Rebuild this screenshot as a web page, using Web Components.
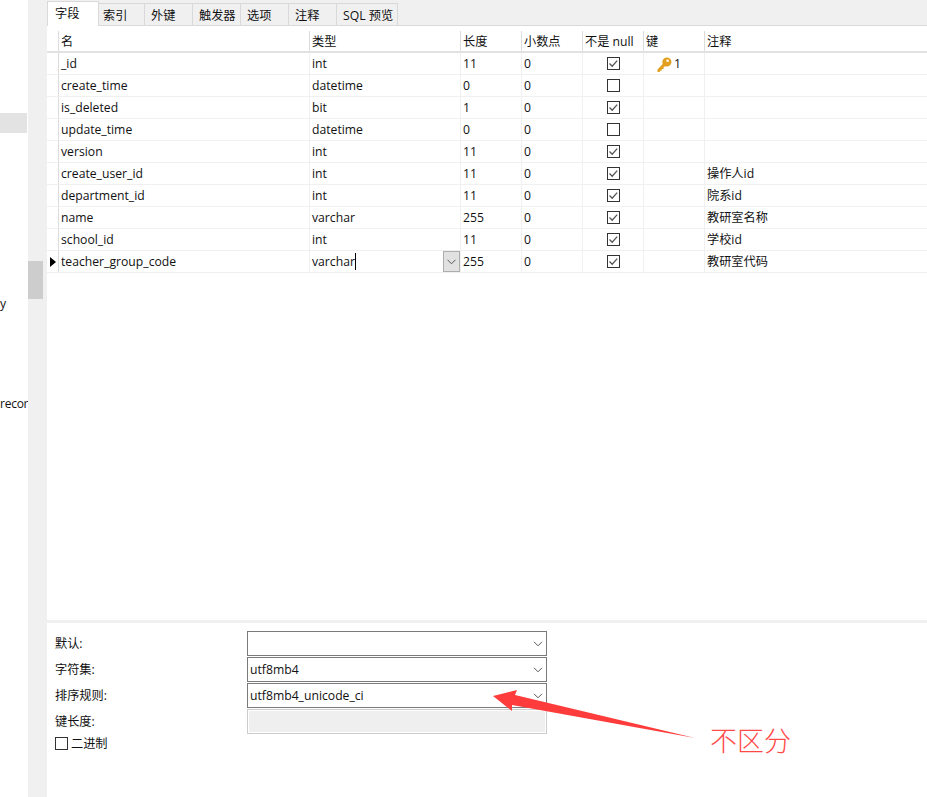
<!DOCTYPE html>
<html lang="zh">
<head>
<meta charset="utf-8">
<title>表设计</title>
<style>
  html, body { margin: 0; height: 100%; background: #fff; overflow: hidden; }
  body {
    font: 12.2px/1 "Open Sans", "Noto Sans CJK SC", sans-serif;
    color: #111;
  }
</style>
</head>
<body>
<table-designer></table-designer>
<script>
const FONT = `"Open Sans", "Noto Sans CJK SC", sans-serif`;

const COLUMNS = ["名", "类型", "长度", "小数点", "不是 null", "键", "注释"];
const FIELDS = [
  { name: "_id", type: "int", len: "11", dec: "0", notNull: true, key: "1", note: "" },
  { name: "create_time", type: "datetime", len: "0", dec: "0", notNull: false, key: "", note: "" },
  { name: "is_deleted", type: "bit", len: "1", dec: "0", notNull: true, key: "", note: "" },
  { name: "update_time", type: "datetime", len: "0", dec: "0", notNull: false, key: "", note: "" },
  { name: "version", type: "int", len: "11", dec: "0", notNull: true, key: "", note: "" },
  { name: "create_user_id", type: "int", len: "11", dec: "0", notNull: true, key: "", note: "操作人id" },
  { name: "department_id", type: "int", len: "11", dec: "0", notNull: true, key: "", note: "院系id" },
  { name: "name", type: "varchar", len: "255", dec: "0", notNull: true, key: "", note: "教研室名称" },
  { name: "school_id", type: "int", len: "11", dec: "0", notNull: true, key: "", note: "学校id" },
  { name: "teacher_group_code", type: "varchar", len: "255", dec: "0", notNull: true, key: "", note: "教研室代码", current: true },
];
const GRID_COLS = "12px 251px 151px repeat(4, 61px) 1fr";

class CheckMark extends HTMLElement {
  constructor() {
    super();
    this.attachShadow({ mode: "open" });
  }
  connectedCallback() {
    const tick = this.hasAttribute("checked")
      ? `<path d="M2.5 6.5 5.2 9.2 10.2 3.6" fill="none" stroke="#555" stroke-width="1.3"/>` : "";
    this.shadowRoot.innerHTML = `
    <style>
      :host { display: inline-block; width: 13px; height: 13px; }
      svg { display: block; }
    </style>
    <svg width="13" height="13" viewBox="0 0 13 13">
      <rect x=".5" y=".5" width="12" height="12" fill="#fff" stroke="#333"/>
      ${tick}
    </svg>`;
  }
}
customElements.define("check-mark", CheckMark);

class KeyIcon extends HTMLElement {
  constructor() {
    super();
    this.attachShadow({ mode: "open" });
  }
  connectedCallback() {
    this.shadowRoot.innerHTML = `
    <style>
      :host { display: inline-block; width: 15px; height: 15px; }
      svg { display: block; }
    </style>
    <svg width="15" height="15" viewBox="0 0 15 15">
      <path fill="#e3a01f" d="M9.8.4a4.7 4.7 0 0 1 4.7 4.7 4.7 4.7 0 0 1-4.7 4.500c-.7 0-1.200-.1-1.700-.4L6.600 10.200v1.700H4.800v1.600H3.400L2.600 15H.5v-2.600l5.200-5.300a4.700 4.700 0 0 1 4.100-6.700z"/>
      <circle cx="10.600" cy="3.800" r="1.300" fill="#fff"/>
    </svg>`;
  }
}
customElements.define("key-icon", KeyIcon);

class FieldTabs extends HTMLElement {
  constructor() {
    super();
    this.attachShadow({ mode: "open" });
  }
  connectedCallback() {
    const tabs = [["字段", 52, 7], ["索引", 46, 4], ["外键", 48, 6], ["触发器", 48, 6], ["选项", 48, 6], ["注释", 48, 6], ["SQL 预览", 61, 6]];
    this.shadowRoot.innerHTML = `
    <style>
      :host {
        display: flex;
        align-items: flex-end;
        height: 26px;
        box-sizing: border-box;
        background: #f0f0f0;
        border-bottom: 1px solid #d9d9d9;
      }
      .tab {
        box-sizing: border-box;
        height: 22px;
        padding-top: 6px;
        border: 1px solid #d9d9d9;
        border-width: 1px 1px 0 0;
        white-space: nowrap;
      }
      .tab.on {
        height: 25px;
        margin-bottom: -1px;
        background: #fff;
        border-width: 1px 1px 0 1px;
      }
    </style>
    ${tabs.map(([t, w, p], i) => `<div class="tab ${i ? "" : "on"}" style="width:${w}px;padding-left:${p}px">${t}</div>`).join("")}`;
  }
}
customElements.define("field-tabs", FieldTabs);

class FieldRow extends HTMLElement {
  constructor() {
    super();
    this.attachShadow({ mode: "open" });
  }
  set field(f) {
    const combo = f.current ? `<span class="caret"></span><span class="drop"><svg width="9" height="6" viewBox="0 0 9 6"><path d="M.5.8 4.500 4.800 8.500.8" fill="none" stroke="#555"/></svg></span>` : "";
    this.shadowRoot.innerHTML = `
    <style>
      :host {
        display: grid;
        grid-template-columns: ${GRID_COLS};
        height: 22px;
        box-sizing: border-box;
        border-bottom: 1px solid #f0f0f0;
      }
      .cell {
        display: flex;
        align-items: center;
        position: relative;
        box-sizing: border-box;
        padding: 2px 0 0 2px;
        border-right: 1px solid #f0f0f0;
        white-space: nowrap;
        min-width: 0;
      }
      .cell:last-child { border-right: 0; }
      .mark { border-right-color: #dcdcdc; padding: 0 0 0 3px; }
      .tri { width: 0; height: 0; border-left: 6px solid #000; border-top: 5.5px solid transparent; border-bottom: 5.5px solid transparent; }
      .center { justify-content: center; padding: 0; }
      .key { padding-left: 13px; gap: 2px; }
      .caret { width: 1px; height: 17px; margin-top: -2px; background: #000; }
      .drop {
        position: absolute; right: 0; top: 0;
        box-sizing: border-box;
        width: 17px; height: 21px;
        display: flex; align-items: center; justify-content: center;
        background: #e1e1e1;
        border: 1px solid #adadad;
      }
    </style>
    <div class="cell mark">${f.current ? `<span class="tri"></span>` : ""}</div>
    <div class="cell">${f.name}</div>
    <div class="cell">${f.type}${combo}</div>
    <div class="cell">${f.len}</div>
    <div class="cell">${f.dec}</div>
    <div class="cell center"><check-mark ${f.notNull ? "checked" : ""}></check-mark></div>
    <div class="cell key">${f.key ? `<key-icon></key-icon><span>${f.key}</span>` : ""}</div>
    <div class="cell">${f.note}</div>`;
  }
}
customElements.define("field-row", FieldRow);

class FieldGrid extends HTMLElement {
  constructor() {
    super();
    this.attachShadow({ mode: "open" });
  }
  connectedCallback() {
    this.shadowRoot.innerHTML = `
    <style>
      :host { display: block; min-height: 0; }
      .head {
        display: grid;
        grid-template-columns: ${GRID_COLS};
        height: 27px;
        box-sizing: border-box;
        padding-top: 5px;
        border-bottom: 2px solid #e2e2e2;
      }
      .head div {
        display: flex;
        align-items: center;
        padding: 2px 0 0 2px;
        border-right: 1px solid #dcdcdc;
        white-space: nowrap;
      }
      .head div:last-child { border-right: 0; }
    </style>
    <div class="head"><div></div>${COLUMNS.map(c => `<div>${c}</div>`).join("")}</div>
    <div class="rows"></div>`;
    const rows = this.shadowRoot.querySelector(".rows");
    FIELDS.forEach(f => {
      const row = document.createElement("field-row");
      rows.append(row);
      row.field = f;
    });
  }
}
customElements.define("field-grid", FieldGrid);

class OptionSelect extends HTMLElement {
  constructor() {
    super();
    this.attachShadow({ mode: "open" });
  }
  connectedCallback() {
    const off = this.hasAttribute("disabled");
    this.shadowRoot.innerHTML = `
    <style>
      :host {
        display: flex;
        align-items: center;
        box-sizing: border-box;
        height: 25px;
        padding: 1px 2px 0 2px;
        border: 1px solid #7a7a7a;
        background: #fff;
      }
      :host([disabled]) {
        border-color: #ccc;
        box-shadow: inset 0 0 0 1px #fff;
        background: #efefef;
      }
      svg { display: block; margin: 0 1px 0 auto; }
    </style>
    <slot></slot>
    ${off ? "" : `<svg width="10" height="6" viewBox="0 0 10 6"><path d="M1 .8 5 4.800 9 .8" fill="none" stroke="#555"/></svg>`}`;
  }
}
customElements.define("option-select", OptionSelect);

class ColumnOptions extends HTMLElement {
  constructor() {
    super();
    this.attachShadow({ mode: "open" });
  }
  connectedCallback() {
    this.shadowRoot.innerHTML = `
    <style>
      :host {
        display: block;
        box-sizing: border-box;
        height: 177px;
        padding: 8px 0 0 8px;
        border-top: 3px solid #f0f0f0;
      }
      .form {
        display: grid;
        grid-template-columns: 192px 300px;
        grid-auto-rows: 25px;
        row-gap: 1px;
        align-items: center;
      }
      .form span { padding-top: 2px; }
      .bin { display: flex; align-items: center; gap: 3px; margin-top: 3px; height: 13px; }
      .bin span { padding-top: 1px; }
    </style>
    <div class="form">
      <span>默认:</span><option-select></option-select>
      <span>字符集:</span><option-select>utf8mb4</option-select>
      <span>排序规则:</span><option-select>utf8mb4_unicode_ci</option-select>
      <span>键长度:</span><option-select disabled></option-select>
    </div>
    <div class="bin"><check-mark></check-mark><span>二进制</span></div>`;
  }
}
customElements.define("column-options", ColumnOptions);

class SideStrip extends HTMLElement {
  constructor() {
    super();
    this.attachShadow({ mode: "open" });
  }
  connectedCallback() {
    this.shadowRoot.innerHTML = `
    <style>
      :host { display: flex; height: 100%; overflow: hidden; }
      .list { width: 28px; overflow: hidden; white-space: nowrap; }
      .sel { height: 20px; width: 27px; margin-top: 113px; background: #e3e3e3; }
      .y { margin-top: 164px; height: 14px; line-height: 14px; }
      .rec { margin-top: 86px; height: 14px; line-height: 14px; font-size: 12px; letter-spacing: -.25px; }
      .bar { width: 19px; background: #f0f0f0; }
      .thumb { width: 15px; height: 38px; margin-top: 261px; background: #cdcdcd; }
    </style>
    <div class="list">
      <div class="sel"></div>
      <div class="y">y</div>
      <div class="rec">recor</div>
    </div>
    <div class="bar"><div class="thumb"></div></div>`;
  }
}
customElements.define("side-strip", SideStrip);

class NoteArrow extends HTMLElement {
  constructor() {
    super();
    this.attachShadow({ mode: "open" });
  }
  connectedCallback() {
    this.shadowRoot.innerHTML = `
    <style>
      :host { position: absolute; left: 480px; top: 680px; width: 330px; height: 90px; }
      svg { position: absolute; left: 0; top: 0; }
      span {
        position: absolute; left: 230px; top: 45px;
        font: 300 27px/30px "Noto Sans CJK SC", sans-serif;
        color: #ff4a4a;
        white-space: nowrap;
      }
    </style>
    <svg width="330" height="90" viewBox="0 0 330 90">
      <path fill="#ff3c3c" d="M13 16 37 10 35 15 215 58 32 25 32 31z"/>
    </svg>
    <span>不区分</span>`;
  }
}
customElements.define("note-arrow", NoteArrow);

class TableDesigner extends HTMLElement {
  constructor() {
    super();
    this.attachShadow({ mode: "open" });
  }
  connectedCallback() {
    this.shadowRoot.innerHTML = `
    <style>
      :host {
        display: grid;
        grid-template-columns: 47px 1fr;
        height: 797px;
        width: 927px;
        position: relative;
        overflow: hidden;
        font-family: ${FONT};
      }
      main { display: flex; flex-direction: column; min-width: 0; }
      field-grid { flex: 1; }
    </style>
    <side-strip></side-strip>
    <main>
      <field-tabs></field-tabs>
      <field-grid></field-grid>
      <column-options></column-options>
    </main>
    <note-arrow></note-arrow>`;
  }
}
customElements.define("table-designer", TableDesigner);
</script>
</body>
</html>
